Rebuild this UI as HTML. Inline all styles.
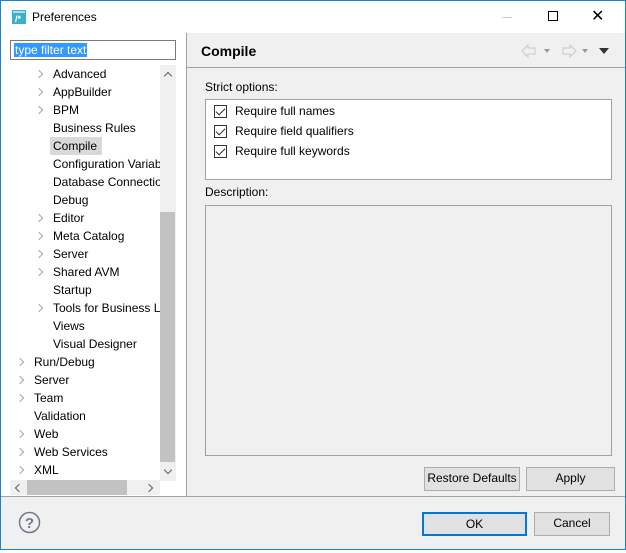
<!DOCTYPE html>
<html><head><meta charset="utf-8"><style>
*{box-sizing:border-box;margin:0;padding:0}
body{width:626px;height:553px;background:#fff;font-family:"Liberation Sans",sans-serif;font-size:12px;color:#000;position:relative;overflow:hidden}
.a{position:absolute}
.win{left:0;top:0;width:626px;height:550px;border:1px solid #1883d7;background:#f0f0f0}
.row{position:absolute;height:18px;line-height:18px;white-space:nowrap}
.chev{position:absolute;width:6px;height:6px;border-right:1.5px solid #a6a6a6;border-top:1.5px solid #a6a6a6;transform:rotate(45deg)}
.sa{position:absolute;width:6px;height:6px;border-right:1.5px solid #606060;border-top:1.5px solid #606060}
.btn{position:absolute;background:#e1e1e1;border:1px solid #adadad;text-align:center;line-height:21px}
.cb{position:absolute;width:13px;height:13px;border:1px solid #333;background:#fff}
.cb:after{content:"";position:absolute;left:3px;top:0px;width:4px;height:8px;border-right:1px solid #333;border-bottom:1px solid #333;transform:rotate(45deg)}
</style></head><body>
<div class="a win"></div>
<div class="a" style="left:1px;top:1px;width:624px;height:32px;background:#fff"></div>
<div class="a" style="left:12px;top:10px;width:14px;height:14px;background:#3bb0c9"></div>
<div class="a" style="left:13px;top:11px;width:12px;height:2px;background:#fff;opacity:.6"></div>
<div class="a" style="left:15px;top:14px;color:#fff;font-size:9px;font-weight:bold;line-height:10px">/*</div>
<div class="a" style="left:32px;top:10px;font-size:12px">Preferences</div>
<div class="a" style="left:502px;top:17px;width:10px;height:1px;background:#ccc"></div>
<div class="a" style="left:548px;top:11px;width:10px;height:10px;border:1px solid #000"></div>
<div class="a" style="left:591px;top:10px;font-size:16px;line-height:14px">✕</div>
<div class="a" style="left:1px;top:33px;width:185px;height:463px;background:#fff"></div>
<div class="a" style="left:186px;top:33px;width:1px;height:463px;background:#a0a0a0"></div>
<div class="a" style="left:1px;top:496px;width:624px;height:1px;background:#a0a0a0"></div>
<div class="a" style="left:10px;top:40px;width:166px;height:20px;border:1px solid #7a7a7a;background:#fff"></div>
<div class="a" style="left:14px;top:43px;height:14px;line-height:14px;background:#3399ff;color:#fff;padding:0 1px">type filter text</div>
<div class="a" style="left:160px;top:65px;width:16px;height:416px;background:#f0f0f0"></div>
<div class="a" style="left:160px;top:212px;width:15px;height:250px;background:#c2c2c2"></div>
<div class="sa" style="left:165px;top:73px;transform:rotate(-45deg)"></div>
<div class="sa" style="left:165px;top:467px;transform:rotate(135deg)"></div>
<div class="a" style="left:10px;top:480px;width:150px;height:15px;background:#f0f0f0"></div>
<div class="a" style="left:27px;top:480px;width:100px;height:15px;background:#c2c2c2"></div>
<div class="sa" style="left:16px;top:485px;transform:rotate(-135deg)"></div>
<div class="sa" style="left:146px;top:485px;transform:rotate(45deg)"></div>
<div class="a" style="left:50px;top:137px;width:52px;height:18px;background:#d9d9d9"></div>
<div class="a" style="left:10px;top:65px;width:150px;height:415px;overflow:hidden">
<div class="chev" style="left:26px;top:6px"></div><div class="row" style="left:43px;top:0">Advanced</div>
<div class="chev" style="left:26px;top:24px"></div><div class="row" style="left:43px;top:18px">AppBuilder</div>
<div class="chev" style="left:26px;top:42px"></div><div class="row" style="left:43px;top:36px">BPM</div>
<div class="row" style="left:43px;top:54px">Business Rules</div>
<div class="row" style="left:43px;top:72px">Compile</div>
<div class="row" style="left:43px;top:90px">Configuration Variables</div>
<div class="row" style="left:43px;top:108px">Database Connections</div>
<div class="row" style="left:43px;top:126px">Debug</div>
<div class="chev" style="left:26px;top:150px"></div><div class="row" style="left:43px;top:144px">Editor</div>
<div class="chev" style="left:26px;top:168px"></div><div class="row" style="left:43px;top:162px">Meta Catalog</div>
<div class="chev" style="left:26px;top:186px"></div><div class="row" style="left:43px;top:180px">Server</div>
<div class="chev" style="left:26px;top:204px"></div><div class="row" style="left:43px;top:198px">Shared AVM</div>
<div class="row" style="left:43px;top:216px">Startup</div>
<div class="chev" style="left:26px;top:240px"></div><div class="row" style="left:43px;top:234px">Tools for Business Logic</div>
<div class="row" style="left:43px;top:252px">Views</div>
<div class="row" style="left:43px;top:270px">Visual Designer</div>
<div class="chev" style="left:7px;top:294px"></div><div class="row" style="left:24px;top:288px">Run/Debug</div>
<div class="chev" style="left:7px;top:312px"></div><div class="row" style="left:24px;top:306px">Server</div>
<div class="chev" style="left:7px;top:330px"></div><div class="row" style="left:24px;top:324px">Team</div>
<div class="row" style="left:24px;top:342px">Validation</div>
<div class="chev" style="left:7px;top:366px"></div><div class="row" style="left:24px;top:360px">Web</div>
<div class="chev" style="left:7px;top:384px"></div><div class="row" style="left:24px;top:378px">Web Services</div>
<div class="chev" style="left:7px;top:402px"></div><div class="row" style="left:24px;top:396px">XML</div>
</div>
<div class="a" style="left:201px;top:43px;font-size:14px;font-weight:bold">Compile</div>
<div class="a" style="left:187px;top:67px;width:438px;height:1px;background:#a0a0a0"></div>
<svg class="a" style="left:520px;top:42px" width="96" height="18">
<path d="M2 9 L8 3 L8 6 L15 6 L15 12 L8 12 L8 15 Z" fill="none" stroke="#c8c8c8"/>
<path d="M24 7 L30 7 L27 11Z" fill="#999"/>
<path d="M56 9 L50 3 L50 6 L43 6 L43 12 L50 12 L50 15 Z" fill="none" stroke="#c8c8c8"/>
<path d="M62 7 L68 7 L65 11Z" fill="#999"/>
<path d="M79 6 L89 6 L84 12Z" fill="#333"/>
</svg>
<div class="a" style="left:205px;top:80px">Strict options:</div>
<div class="a" style="left:205px;top:99px;width:407px;height:81px;background:#fff;border:1px solid #a0a0a0"></div>
<div class="cb" style="left:214px;top:105px"></div><div class="a" style="left:235px;top:104px">Require full names</div>
<div class="cb" style="left:214px;top:125px"></div><div class="a" style="left:235px;top:124px">Require field qualifiers</div>
<div class="cb" style="left:214px;top:145px"></div><div class="a" style="left:235px;top:144px">Require full keywords</div>
<div class="a" style="left:205px;top:185px">Description:</div>
<div class="a" style="left:205px;top:205px;width:407px;height:251px;border:1px solid #a0a0a0"></div>
<div class="btn" style="left:424px;top:467px;width:96px;height:24px">Restore Defaults</div>
<div class="btn" style="left:526px;top:467px;width:89px;height:24px">Apply</div>
<svg class="a" style="left:18px;top:511px" width="24" height="24"><circle cx="11.5" cy="11.5" r="10" fill="none" stroke="#6b7a90" stroke-width="1.5"/><text x="11.5" y="17" text-anchor="middle" font-family="Liberation Sans" font-weight="bold" font-size="15" fill="#6b7a90">?</text></svg>
<div class="btn" style="left:422px;top:512px;width:105px;height:24px;border:2px solid #0078d7;line-height:20px">OK</div>
<div class="btn" style="left:534px;top:512px;width:76px;height:24px">Cancel</div>
</body></html>
